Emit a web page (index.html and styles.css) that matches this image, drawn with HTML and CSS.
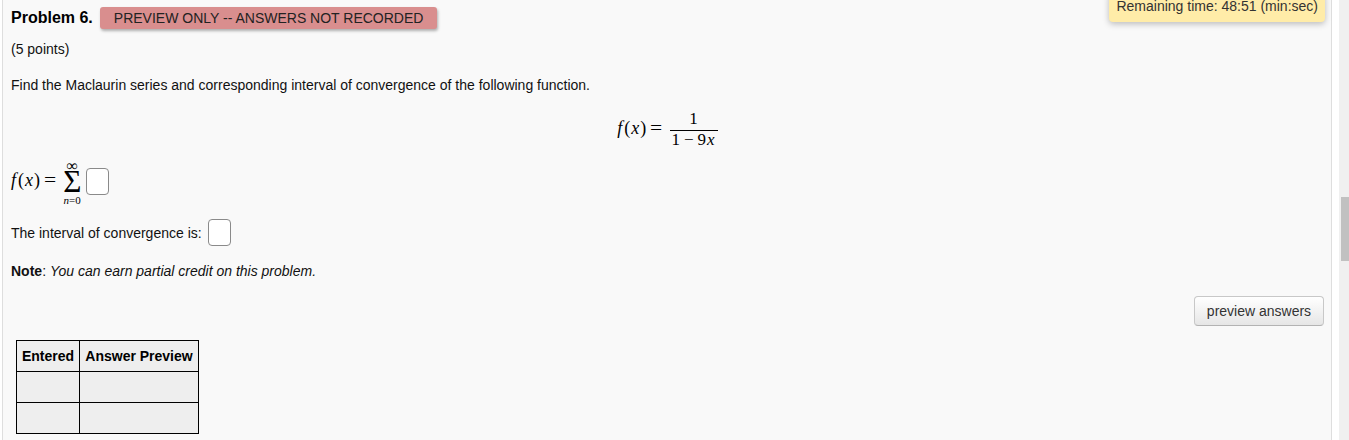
FILE: index.html
```html
<!DOCTYPE html>
<html lang="en">
<head>
<meta charset="utf-8">
<title>Problem 6</title>
<link rel="stylesheet" href="styles.css">
</head>
<body>
<div class="page">
  <div class="timer">Remaining time: 48:51 (min:sec)</div>
  <div class="head">
    <h3 class="title">Problem 6.</h3>
    <span class="badge">PREVIEW ONLY -- ANSWERS NOT RECORDED</span>
  </div>
  <p class="points">(5 points)</p>
  <p class="question">Find the Maclaurin series and corresponding interval of convergence of the following function.</p>
  <div class="display">
    <span class="lhs"><i class="f">f</i><span class="paren">(</span><i class="x">x</i><span class="paren">)</span><span class="eq">=</span></span>
    <span class="frac"><span class="num">1</span><span class="den">1<span class="op">−</span>9<i class="x">x</i></span></span>
  </div>
  <div class="sumline">
    <span class="lhs sum-lhs"><i class="f">f</i><span class="paren">(</span><i class="x">x</i><span class="paren">)</span><span class="eq">=</span></span>
    <span class="sum">
      <span class="sup">∞</span>
      <span class="sigma">Σ</span>
      <span class="sub"><i>n</i>=0</span>
    </span>
    <span class="ansbox sum-box"></span>
  </div>
  <div class="interval">
    <span>The interval of convergence is:</span>
    <span class="ansbox"></span>
  </div>
  <p class="note"><b>Note</b>: <i>You can earn partial credit on this problem.</i></p>
  <div class="actions">
    <button class="btn" type="button">preview answers</button>
  </div>
  <table class="results">
    <tr><th class="c1">Entered</th><th class="c2">Answer Preview</th></tr>
    <tr><td></td><td></td></tr>
    <tr><td></td><td></td></tr>
  </table>
</div>
<div class="gutter"></div>
<div class="scrollbar"><div class="thumb"></div></div>
</body>
</html>
```
FILE: styles.css
```css
html, body {
  margin: 0;
  padding: 0;
  height: 440px;
  overflow: hidden;
  background: #ffffff;
}
body {
  display: flex;
  font-family: "Liberation Sans", Arial, sans-serif;
  font-size: 14px;
  color: #111;
}
.page {
  position: relative;
  flex: 1;
  margin-left: 2px;
  border-left: 1px solid #dedede;
  border-right: 1px solid #dedede;
  background: #f9f9f9;
  padding: 0 7px 0 8px;
  min-height: 440px;
}
.gutter {
  width: 7px;
  background: #ffffff;
}
.scrollbar {
  width: 10px;
  background: #f0f0f0;
}
.thumb {
  margin-top: 197px;
  margin-left: 2px;
  height: 64px;
  background: #c1c1c1;
}
.timer {
  position: absolute;
  top: -8px;
  right: 6px;
  padding: 5px 7px 7px;
  line-height: 18px;
  background: #ffeca8;
  color: #333;
  border-radius: 4px;
  box-shadow: 0 2px 6px rgba(0, 0, 0, 0.25);
}
.head {
  display: flex;
  align-items: center;
  padding-top: 7px;
  height: 22px;
}
.title {
  margin: 0;
  font-size: 16px;
  font-weight: bold;
  color: #000;
}
.badge {
  margin-left: 7px;
  height: 22px;
  line-height: 22px;
  padding: 0 14px;
  background: #d98e8e;
  color: #222;
  border-radius: 3px;
  box-shadow: 1px 2px 3px rgba(0, 0, 0, 0.3);
}
.points {
  margin: 10px 0 0;
  line-height: 20px;
}
.question {
  margin: 16px 0 0;
  line-height: 20px;
}
.display {
  margin-top: 15px;
  display: flex;
  justify-content: center;
  align-items: center;
  font-family: "Liberation Serif", "Times New Roman", serif;
  font-size: 17px;
  color: #000;
}
.lhs {
  line-height: 18px;
  font-family: "Liberation Serif", "Times New Roman", serif;
  font-size: 18px;
  margin-bottom: 3px;
}
.f {
  margin-right: 2px;
}
.x {
  margin: 0 1px;
}
.eq {
  display: inline-block;
  margin: 0 8px 0 5px;
  transform: scaleX(1.2);
}
.frac {
  display: inline-flex;
  flex-direction: column;
  align-items: center;
}
.num {
  line-height: 18px;
  padding-bottom: 2px;
}
.den {
  line-height: 18px;
  border-top: 1px solid #000;
  padding: 0 2px;
}
.op {
  margin: 0 4px;
}
.sumline {
  margin-top: 12px;
  display: flex;
  align-items: flex-start;
  font-family: "Liberation Serif", "Times New Roman", serif;
  color: #000;
}
.sum-lhs {
  margin-top: 10px;
  margin-bottom: 0;
}
.sum-lhs .eq {
  margin-right: 5px;
}
.sum {
  display: flex;
  flex-direction: column;
  align-items: center;
  margin-left: 2px;
  width: 20px;
}
.sup {
  display: block;
  font-size: 16px;
  line-height: 10px;
  height: 10px;
  margin-bottom: 3px;
}
.sigma {
  display: block;
  font-size: 25px;
  line-height: 16px;
  height: 16px;
  transform: scale(1.25);
}
.sub {
  display: block;
  font-size: 11px;
  line-height: 11px;
  margin-top: 5px;
}
.ansbox {
  display: inline-block;
  box-sizing: border-box;
  width: 23px;
  height: 27px;
  background: #ffffff;
  border: 1px solid #8a8a8a;
  border-radius: 4px;
}
.sum-box {
  margin-top: 7px;
  margin-left: 4px;
}
.interval {
  margin-top: 13px;
  display: flex;
  align-items: center;
  gap: 6px;
  height: 27px;
}
.note {
  margin: 15px 0 0;
  line-height: 20px;
}
.actions {
  margin-top: 15px;
  display: flex;
  justify-content: flex-end;
}
.btn {
  height: 30px;
  width: 130px;
  padding: 0;
  font-family: "Liberation Sans", Arial, sans-serif;
  font-size: 14px;
  color: #333;
  background: linear-gradient(#ffffff, #e6e6e6);
  border: 1px solid #c8c8c8;
  border-bottom-color: #b3b3b3;
  border-radius: 4px;
}
.results {
  margin: 14px 0 0 5px;
  border-collapse: collapse;
  background: #eeeeee;
}
.results tr {
  height: 31px;
}
.results th,
.results td {
  border: 1px solid #000;
  padding: 0;
}
.results th {
  font-weight: bold;
  text-align: center;
  color: #000;
}
.c1 { width: 62px; }
.c2 { width: 118px; }
```
